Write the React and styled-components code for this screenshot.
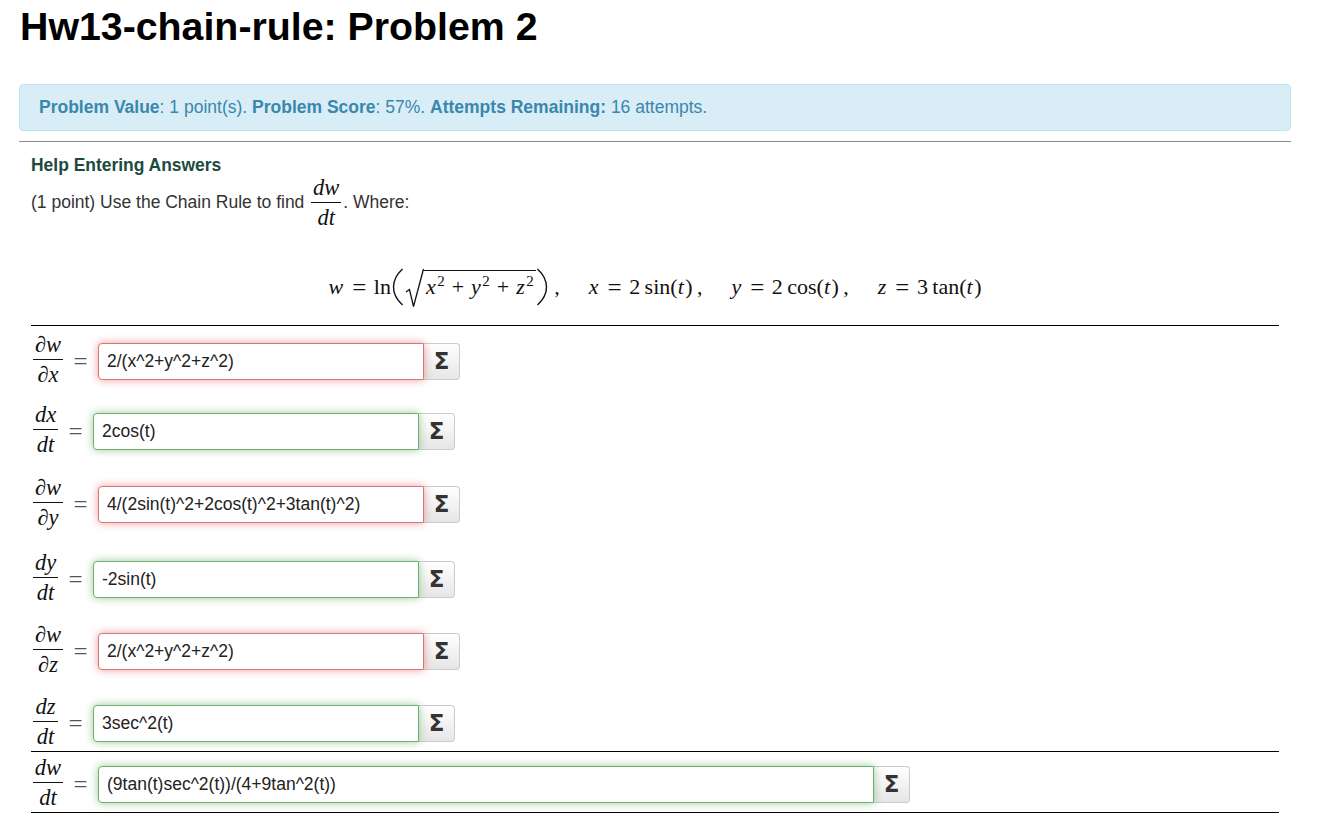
import React from "react";
import styled, { createGlobalStyle } from "styled-components";

const Global = createGlobalStyle`
  html, body { margin: 0; padding: 0; background: #fff; }
  body { font-family: "Liberation Sans", Arial, sans-serif; font-size: 17.5px; color: #333; }
`;

const Page = styled.div`
  width: 1337px;
  height: 825px;
  overflow: hidden;
  padding: 0 46px 0 19px;
  box-sizing: border-box;
`;

const Title = styled.h1`
  margin: 0;
  padding: 4px 0 0 1px;
  height: 84px;
  box-sizing: border-box;
  font-size: 39.3px;
  line-height: 44px;
  font-weight: 700;
  color: #000;
`;

const Alert = styled.div`
  height: 47px;
  box-sizing: border-box;
  padding: 0 19px;
  display: flex;
  align-items: center;
  background: #d9edf7;
  border: 1px solid #bce8f1;
  border-radius: 4px;
  color: #3a87ad;
  font-size: 17.5px;
`;

const Problem = styled.div`
  margin-top: 10px;
  border-top: 1px solid #8a8a8a;
  padding: 0 12px;
`;

const Help = styled.div`
  margin-top: 13px;
  height: 20px;
  line-height: 20px;
  font-size: 17.45px;
  font-weight: 700;
  color: #1d4a40;
`;

const Intro = styled.div`
  display: flex;
  align-items: center;
  height: 54px;
  color: #333;
  font-size: 17.5px;
`;

const Frac = styled.span`
  display: inline-flex;
  flex-direction: column;
  align-items: center;
  flex: none;
  width: ${(p) => p.$w}px;
  font-family: "Liberation Serif", serif;
  font-style: italic;
  font-size: 22.5px;
  line-height: 25px;
  color: #111;
  margin: ${(p) => p.$margin || "0 0 4px 2px"};
`;

const Num = styled.span`
  padding-bottom: 2px;
  border-bottom: 1.5px solid #111;
  align-self: stretch;
  text-align: center;
`;

const Den = styled.span`
  padding-top: 2px;
`;

const Display = styled.div`
  margin-top: 20px;
  height: 76px;
  display: flex;
  justify-content: center;
  align-items: center;
  gap: 29px;
  font-family: "Liberation Serif", serif;
  font-size: 22px;
  color: #111;
  white-space: nowrap;
`;

const Expr = styled.span`
  display: inline-flex;
  align-items: center;
`;

const I = styled.i`
  font-style: italic;
  margin-right: 1.5px;
`;

const Rel = styled.span`
  font-size: 25px;
  line-height: 1;
  margin: 0 7.5px;
`;

const Op = styled.span`
  margin: 0 7px;
`;

const Sup = styled.sup`
  font-size: 15px;
  line-height: 0;
  vertical-align: 8px;
  font-style: normal;
`;

const Rad = styled.span`
  display: inline-block;
  border-top: 1.2px solid #111;
  padding: 2px 2px 0 2px;
  margin-top: -5px;
  line-height: 27px;
`;

const Section = styled.div`
  border-top: 1px solid #000;
`;

const Row = styled.div`
  display: flex;
  align-items: center;
  height: ${(p) => p.$h}px;
  padding-top: ${(p) => p.$top || 0}px;
  box-sizing: border-box;
`;

const Eq = styled.span`
  flex: none;
  width: 15px;
  text-align: center;
  font-family: "Liberation Serif", serif;
  font-size: 25px;
  line-height: 1;
  color: #555;
  margin: 0 10px;
`;

const Field = styled.input`
  width: ${(p) => p.$w}px;
  height: 37px;
  box-sizing: border-box;
  padding: 0 8px;
  font-family: "Liberation Sans", Arial, sans-serif;
  font-size: 17.5px;
  color: #222;
  background: #fff;
  border: 1px solid ${(p) => (p.$ok ? "#6fb06f" : "#d07a7a")};
  border-radius: 4px 0 0 4px;
  box-shadow: 0 0 8px ${(p) => (p.$ok ? "rgba(70,160,70,.55)" : "rgba(230,70,70,.55)")};
  outline: none;
  position: relative;
  z-index: 1;
`;

const SigmaBtn = styled.button`
  width: 36px;
  height: 37px;
  padding: 0;
  box-sizing: border-box;
  border: 1px solid #ccc;
  border-left: 0;
  border-radius: 0 4px 4px 0;
  background: linear-gradient(#fff, #e6e6e6);
  font-family: "DejaVu Sans", sans-serif;
  font-weight: 700;
  font-size: 23px;
  line-height: 1;
  color: #333;
`;

const Paren = ({ flip }) => (
  <svg width="13" height="38" viewBox="0 0 13 38" style={{ transform: flip ? "scaleX(-1)" : "none" }}>
    <path d="M11.5 1C5 7 2.5 12 2.5 19S5 31 11.5 37" fill="none" stroke="#111" strokeWidth="1.4" />
  </svg>
);

const Root = () => (
  <svg width="20" height="40" viewBox="0 0 20 40" style={{ marginTop: "1px" }}>
    <path d="M2 24l3.5-2.5 4 17L19.5 1" fill="none" stroke="#111" strokeWidth="1.3" />
  </svg>
);

const rows = [
  { n: "∂w", d: "∂x", w: 30, v: "2/(x^2+y^2+z^2)", ok: false, h: 70 },
  { n: "dx", d: "dt", w: 25, v: "2cos(t)", ok: true, h: 71 },
  { n: "∂w", d: "∂y", w: 30, v: "4/(2sin(t)^2+2cos(t)^2+3tan(t)^2)", ok: false, h: 75 },
  { n: "dy", d: "dt", w: 25, v: "-2sin(t)", ok: true, h: 75 },
  { n: "∂w", d: "∂z", w: 30, v: "2/(x^2+y^2+z^2)", ok: false, h: 69 },
  { n: "dz", d: "dt", w: 25, v: "3sec^2(t)", ok: true, h: 65, top: 10 },
];

export default function App() {
  return (
    <Page>
      <Global />
      <Title>Hw13-chain-rule: Problem 2</Title>
      <Alert>
        <span>
          <b>Problem Value</b>: 1 point(s). <b>Problem Score</b>: 57%. <b>Attempts Remaining:</b> 16 attempts.
        </span>
      </Alert>
      <Problem>
        <Help>Help Entering Answers</Help>
        <Intro>
          (1 point) Use the Chain Rule to find&nbsp;
          <Frac $w={30} $margin="0 2px 0 2px">
            <Num>dw</Num>
            <Den>dt</Den>
          </Frac>
          . Where:
        </Intro>
        <Display>
          <Expr>
            <I>w</I>
            <Rel>=</Rel>ln
            <Paren />
            <Root />
            <Rad>
              <I>x</I><Sup>2</Sup><Op>+</Op><I>y</I><Sup>2</Sup><Op>+</Op><I>z</I><Sup>2</Sup>
            </Rad>
            <Paren flip />
            &nbsp;,
          </Expr>
          <Expr><I>x</I><Rel>=</Rel>2&thinsp;sin(<I>t</I>)&thinsp;,</Expr>
          <Expr><I>y</I><Rel>=</Rel>2&thinsp;cos(<I>t</I>)&thinsp;,</Expr>
          <Expr><I>z</I><Rel>=</Rel>3&thinsp;tan(<I>t</I>)</Expr>
        </Display>
        <Section>
          {rows.map((r, i) => (
            <Row key={i} $h={r.h} $top={r.top}>
              <Frac $w={r.w}>
                <Num>{r.n}</Num>
                <Den>{r.d}</Den>
              </Frac>
              <Eq>=</Eq>
              <Field $w={326} $ok={r.ok} defaultValue={r.v} />
              <SigmaBtn>Σ</SigmaBtn>
            </Row>
          ))}
        </Section>
        <Section>
          <Row $h={60} $top={5}>
            <Frac $w={30}>
              <Num>dw</Num>
              <Den>dt</Den>
            </Frac>
            <Eq>=</Eq>
            <Field $w={776} $ok defaultValue="(9tan(t)sec^2(t))/(4+9tan^2(t))" />
            <SigmaBtn>Σ</SigmaBtn>
          </Row>
        </Section>
        <Section />
      </Problem>
    </Page>
  );
}
